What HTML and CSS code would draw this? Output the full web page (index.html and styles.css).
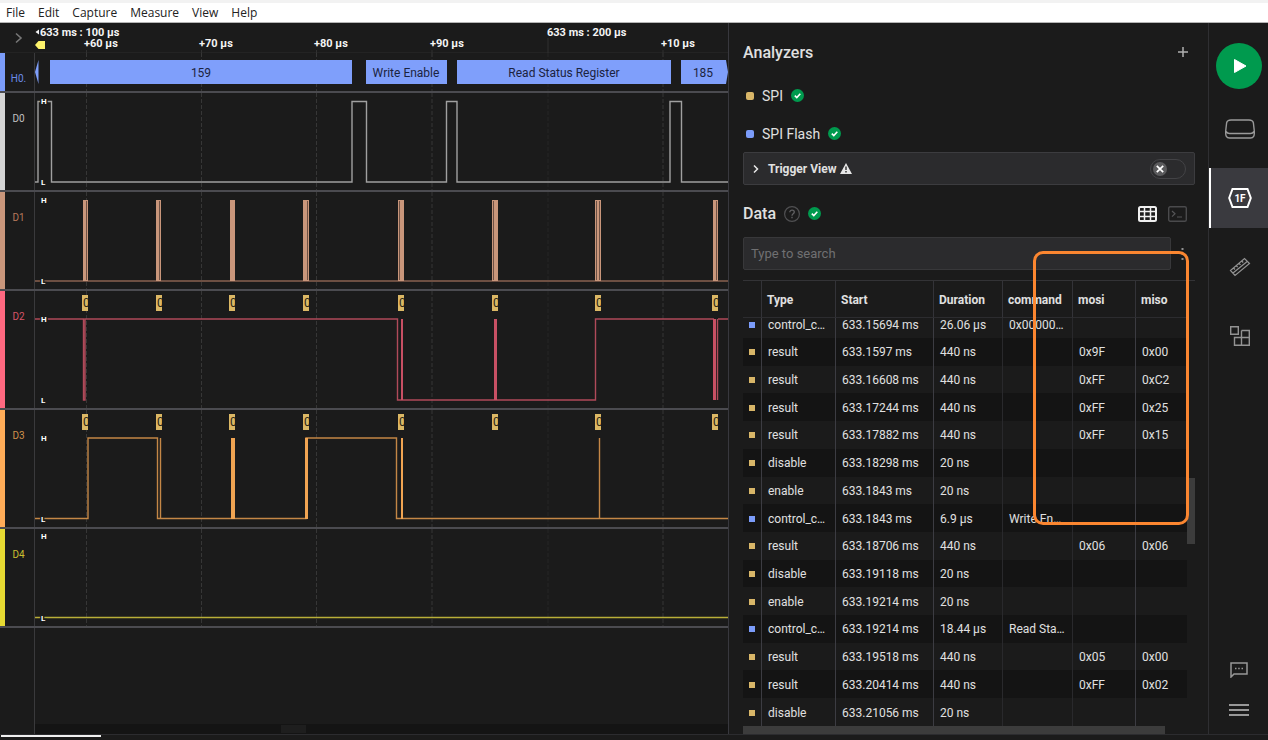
FILE: index.html
```html
<!DOCTYPE html>
<html lang="en">
<head>
	<meta charset="utf-8">
	<title>Logic Analyzer</title>
	<meta name="viewport" content="width=device-width, initial-scale=1">
	<link rel="stylesheet" href="styles.css">
</head>
<body>
	<svg class="defs" width="0" height="0" aria-hidden="true">
		<defs>
			<g id="grid">
				<path class="grid-line" d="M51.5 0V120M166.5 0V120M281.5 0V120M397 0V120M628 0V120"/>
				<path class="grid-line faint" d="M513 0V120"/>
			</g>
			<symbol id="byte" viewBox="0 0 6 16">
				<rect width="6" height="16" fill="#dbb865"/>
				<text class="byte-text" x="1" y="12">0</text>
			</symbol>
			<g id="bytes">
				<use href="#byte" x="47" y="4" width="6" height="16"/>
				<use href="#byte" x="121" y="4" width="6" height="16"/>
				<use href="#byte" x="194" y="4" width="6" height="16"/>
				<use href="#byte" x="268" y="4" width="6" height="16"/>
				<use href="#byte" x="363" y="4" width="6" height="16"/>
				<use href="#byte" x="457" y="4" width="6" height="16"/>
				<use href="#byte" x="560" y="4" width="6" height="16"/>
				<use href="#byte" x="677" y="4" width="6" height="16"/>
			</g>
			<symbol id="check" viewBox="0 0 13 13">
				<circle cx="6.5" cy="6.5" r="6.5" fill="#009a4e"/>
				<path d="M3.8 6.6L5.8 8.5L9.3 4.7" fill="none" stroke="#fff" stroke-width="1.6"/>
			</symbol>
		</defs>
	</svg>

	<nav class="menu-bar">
		<button>File</button>
		<button>Edit</button>
		<button>Capture</button>
		<button>Measure</button>
		<button>View</button>
		<button>Help</button>
	</nav>

	<div class="app">
		<main class="waves">
			<div class="ruler">
				<button class="expand" aria-label="Expand channels">
					<svg width="8" height="12" viewBox="0 0 8 12"><path d="M1 1.5L6 6L1 10.5" fill="none" stroke="#777" stroke-width="1.6"/></svg>
				</button>
				<svg class="track" height="30">
					<path d="M4 6.5V11.5L0.5 9Z" fill="#f4f4f4"/>
					<path d="M0 22L3.5 18H10V26H3.5Z" fill="#fdf36b"/>
					<text class="time" x="5" y="13">633 ms : 100 µs</text>
					<text class="time" x="512" y="13">633 ms : 200 µs</text>
					<text class="time" x="49" y="24">+60 µs</text>
					<text class="time" x="164" y="24">+70 µs</text>
					<text class="time" x="279" y="24">+80 µs</text>
					<text class="time" x="395" y="24">+90 µs</text>
					<text class="time" x="626" y="24">+10 µs</text>
					<path d="M51.5 27V30M166.5 27V30M281.5 27V30M397 27V30M628 27V30M513 15V30" stroke="#303030"/>
				</svg>
			</div>

			<div class="lane lane-h0">
				<div class="name">H0.</div>
				<svg class="track" height="38">
					<use href="#grid"/>
					<g class="frame">
						<path d="M0 19L3.5 7V31Z"/>
						<rect x="15" y="7" width="302" height="24"/>
						<rect x="331" y="7" width="81" height="24"/>
						<rect x="422" y="7" width="214" height="24"/>
						<path d="M646 7H691L693 19L691 31H646Z"/>
					</g>
					<g class="frame-text">
						<text x="166" y="24">159</text>
						<text x="371" y="24">Write Enable</text>
						<text x="529" y="24">Read Status Register</text>
						<text x="668" y="24">185</text>
					</g>
				</svg>
			</div>

			<div class="lane lane-d0">
				<div class="name">D0</div>
				<svg class="track" height="97">
					<use href="#grid"/>
					<path class="signal" d="M0 89H3V8.5H16.5V89H317V8.5H331.5V89H411.5V8.5H422V89H635V8.5H646.5V89H2000"/>
					<text class="level" x="6" y="11">H</text>
					<text class="level" x="6" y="92">L</text>
				</svg>
			</div>

			<div class="lane lane-d1">
				<div class="name">D1</div>
				<svg class="track" height="97">
					<use href="#grid"/>
					<path class="signal" d="M0 89H2000"/>
					<path class="burst" d="M48 8h5v81h-5zM121 8h5v81h-5zM195 8h5v81h-5zM268 8h6v81h-6zM363 8h6v81h-6zM457 8h6v81h-6zM560 8h6v81h-6zM678 8h5v81h-5z"/>
					<path class="streak" d="M51.5 9V88M124.5 9V88M272.5 9V88M364.5 9V88M458.5 9V88M561.5 9V88M564.5 9V88M681.5 9V88"/>
					<text class="level" x="6" y="11">H</text>
					<text class="level" x="6" y="92">L</text>
				</svg>
			</div>

			<div class="lane lane-d2">
				<div class="name">D2</div>
				<svg class="track" height="117">
					<use href="#grid"/>
					<use href="#bytes"/>
					<path class="signal" d="M0 28H48.5V109H50V28H362.5V109H560.5V28H679M683 28H2000"/>
					<path class="burst" d="M366 28h2v81h-2zM459 28h3v81h-3zM678 28h3v81h-3z"/>
					<path class="signal" d="M682.5 28V109"/>
					<text class="level" x="6" y="31">H</text>
					<text class="level" x="6" y="112">L</text>
				</svg>
			</div>

			<div class="lane lane-d3">
				<div class="name">D3</div>
				<svg class="track" height="117">
					<use href="#grid"/>
					<use href="#bytes"/>
					<path class="signal" d="M0 108.5H53V28H122.5V108.5H271V28H361.5V108.5H2000M125.5 28V108.5M564.5 28V108.5"/>
					<path class="burst" d="M196 28h4v81h-4zM270 28h3v81h-3zM366 28h2v81h-2z"/>
					<text class="level" x="6" y="31">H</text>
					<text class="level" x="6" y="112">L</text>
				</svg>
			</div>

			<div class="lane lane-d4">
				<div class="name">D4</div>
				<svg class="track" height="97">
					<use href="#grid"/>
					<path class="signal" d="M0 88.5H2000"/>
					<text class="level" x="6" y="10">H</text>
					<text class="level" x="6" y="92">L</text>
				</svg>
			</div>

			<div class="waves-rest">
				<div class="wave-scroll"><div class="wave-thumb"></div></div>
			</div>
		</main>

		<section class="panel">
			<div class="panel-head">
				<h2>Analyzers</h2>
				<button class="add" aria-label="Add analyzer">
					<svg width="10" height="10" viewBox="0 0 10 10"><path d="M5 0V10M0 5H10" stroke="#b0b0b0" stroke-width="1.5"/></svg>
				</button>
			</div>
			<div class="analyzer">
				<span class="dot gold"></span>SPI
				<svg width="13" height="13"><use href="#check"/></svg>
			</div>
			<div class="analyzer">
				<span class="dot blue"></span>SPI Flash
				<svg width="13" height="13"><use href="#check"/></svg>
			</div>

			<div class="trigger">
				<button class="trigger-name">
					<svg class="chevron" width="6" height="8" viewBox="0 0 6 8"><path d="M1 0.5L4.5 4L1 7.5" fill="none" stroke="#e8e8e8" stroke-width="1.5"/></svg>
					Trigger View
					<svg width="12" height="11" viewBox="0 0 12 11"><path d="M6 0L12 11H0Z" fill="#e8e8e8"/><path d="M6 3.5V7M6 8V9.5" stroke="#2b2b2d" stroke-width="1.4"/></svg>
				</button>
				<label class="switch">
					<input type="checkbox" aria-label="Enable trigger view">
					<svg width="14" height="14" viewBox="0 0 14 14"><circle cx="7" cy="7" r="7" fill="#5a5a5c"/><path d="M3.8 3.8L10.2 10.2M10.2 3.8L3.8 10.2" stroke="#fff" stroke-width="1.7"/></svg>
				</label>
			</div>

			<div class="data-head">
				<h2>Data</h2>
				<svg width="16" height="16" viewBox="0 0 16 16"><circle cx="8" cy="8" r="7.4" fill="none" stroke="#505052" stroke-width="1.2"/><path d="M5.8 6.2C5.8 3.4 10.3 3.5 10.3 6.1C10.3 7.8 8 7.9 8 9.7M8 10.8V12.2" fill="none" stroke="#606062" stroke-width="1.3"/></svg>
				<svg width="13" height="13"><use href="#check"/></svg>
				<button class="view-table" aria-label="Table view">
					<svg width="19" height="16" viewBox="0 0 19 16"><rect x="1" y="1" width="17" height="14" rx="1.5" fill="none" stroke="#f0f0f0" stroke-width="2"/><path d="M1 5.5H18M1 10.5H18M6.5 1V15M12.5 1V15" stroke="#f0f0f0" stroke-width="1.5"/></svg>
				</button>
				<button aria-label="Terminal view">
					<svg width="19" height="16" viewBox="0 0 19 16"><rect x="0.7" y="0.7" width="17.6" height="14.6" rx="1.5" fill="none" stroke="#4a4a4c" stroke-width="1.4"/><path d="M4 5L7 7.8L4 10.6M9 11H14" fill="none" stroke="#555557" stroke-width="1.2"/></svg>
				</button>
			</div>

			<div class="search-row">
				<input type="text" class="search" placeholder="Type to search" aria-label="Search data">
				<button aria-label="Table options">
					<svg width="3" height="14" viewBox="0 0 3 14"><path d="M0.5 1h2v2h-2zM0.5 6h2v2h-2zM0.5 11h2v2h-2z" fill="#909090"/></svg>
				</button>
			</div>

			<div class="table-area">
				<table class="data">
					<colgroup>
						<col class="c-dot"><col class="c-type"><col class="c-start"><col class="c-duration"><col class="c-command"><col class="c-mosi"><col>
					</colgroup>
					<thead>
						<tr><th></th><th>Type</th><th>Start</th><th>Duration</th><th>command</th><th>mosi</th><th>miso</th></tr>
					</thead>
					<tbody>
						<tr class="clipped"><td><span class="mark blue"></span></td><td>control_c…</td><td>633.15694 ms</td><td>26.06 µs</td><td>0x00000…</td><td></td><td></td></tr>
						<tr><td><span class="mark gold"></span></td><td>result</td><td>633.1597 ms</td><td>440 ns</td><td></td><td>0x9F</td><td>0x00</td></tr>
						<tr><td><span class="mark gold"></span></td><td>result</td><td>633.16608 ms</td><td>440 ns</td><td></td><td>0xFF</td><td>0xC2</td></tr>
						<tr><td><span class="mark gold"></span></td><td>result</td><td>633.17244 ms</td><td>440 ns</td><td></td><td>0xFF</td><td>0x25</td></tr>
						<tr><td><span class="mark gold"></span></td><td>result</td><td>633.17882 ms</td><td>440 ns</td><td></td><td>0xFF</td><td>0x15</td></tr>
						<tr><td><span class="mark gold"></span></td><td>disable</td><td>633.18298 ms</td><td>20 ns</td><td></td><td></td><td></td></tr>
						<tr><td><span class="mark gold"></span></td><td>enable</td><td>633.1843 ms</td><td>20 ns</td><td></td><td></td><td></td></tr>
						<tr><td><span class="mark blue"></span></td><td>control_c…</td><td>633.1843 ms</td><td>6.9 µs</td><td>Write En…</td><td></td><td></td></tr>
						<tr><td><span class="mark gold"></span></td><td>result</td><td>633.18706 ms</td><td>440 ns</td><td></td><td>0x06</td><td>0x06</td></tr>
						<tr><td><span class="mark gold"></span></td><td>disable</td><td>633.19118 ms</td><td>20 ns</td><td></td><td></td><td></td></tr>
						<tr><td><span class="mark gold"></span></td><td>enable</td><td>633.19214 ms</td><td>20 ns</td><td></td><td></td><td></td></tr>
						<tr><td><span class="mark blue"></span></td><td>control_c…</td><td>633.19214 ms</td><td>18.44 µs</td><td>Read Sta…</td><td></td><td></td></tr>
						<tr><td><span class="mark gold"></span></td><td>result</td><td>633.19518 ms</td><td>440 ns</td><td></td><td>0x05</td><td>0x00</td></tr>
						<tr><td><span class="mark gold"></span></td><td>result</td><td>633.20414 ms</td><td>440 ns</td><td></td><td>0xFF</td><td>0x02</td></tr>
						<tr><td><span class="mark gold"></span></td><td>disable</td><td>633.21056 ms</td><td>20 ns</td><td></td><td></td><td></td></tr>
					</tbody>
				</table>
				<div class="v-scroll"><div class="v-thumb"></div></div>
			</div>
			<div class="h-thumb"></div>
			<div class="highlight"></div>
		</section>

		<aside class="rail">
			<button class="play" aria-label="Start capture">
				<svg width="14" height="16" viewBox="0 0 14 16"><path d="M1.5 1.5V14.5L13 8Z" fill="#fff" stroke="#fff" stroke-linejoin="round"/></svg>
			</button>
			<button class="rail-item" aria-label="Device">
				<svg width="30" height="20" viewBox="0 0 30 20"><path d="M6 1H24C27 1 28 2 28.4 4L29.3 12C29.6 17 28.5 19 25.5 19H4.5C1.5 19 0.4 17 0.7 12L1.6 4C2 2 3 1 6 1ZM1 12.5C2 14 3 14.5 4.5 14.5H25.5C27 14.5 28 14 29 12.5" fill="none" stroke="#9a9a9a" stroke-width="1.4"/></svg>
			</button>
			<button class="rail-item active" aria-label="Analyzers">
				<svg width="24" height="20" viewBox="0 0 24 20"><path d="M4.5 1H19.5L22.8 10L19.5 19H4.5L1.2 10Z" fill="none" stroke="#fff" stroke-width="2"/><text class="hex" x="12" y="14">1F</text></svg>
			</button>
			<button class="rail-item" aria-label="Measurements">
				<svg width="22" height="20" viewBox="0 0 22 20"><path d="M1.5 13.5L15.5 1.5L20.5 6.5L6 18.5ZM4 16L18.5 4.2M4.5 11L6 12.5M7.2 8.7L8.7 10.2M10 6.4L11.5 7.9M12.7 4L14.2 5.5" fill="none" stroke="#939393" stroke-width="1.2"/></svg>
			</button>
			<button class="rail-item" aria-label="Extensions">
				<svg width="20" height="20" viewBox="0 0 20 20"><path d="M0.7 0.7H8.3V8.3H0.7ZM11.5 4.5H19.3V19.3H4.5V11.5H19.3M11.5 4.5V19.3" fill="none" stroke="#939393" stroke-width="1.4"/></svg>
			</button>
			<div class="rail-bottom">
				<button aria-label="Feedback">
					<svg width="18" height="16" viewBox="0 0 18 16"><path d="M1 15V1H17V12H4Z" fill="none" stroke="#989898" stroke-width="1.5"/><path d="M5 6.5h1.5M8.2 6.5h1.5M11.5 6.5h1.5" stroke="#989898" stroke-width="1.5"/></svg>
				</button>
				<button aria-label="Main menu">
					<svg width="20" height="14" viewBox="0 0 20 14"><path d="M0 2H20M0 7H20M0 12H20" stroke="#989898" stroke-width="2"/></svg>
				</button>
			</div>
		</aside>
	</div>

	<footer class="tab-strip"><div class="tab-line"></div></footer>
</body>
</html>
```
FILE: styles.css
```css
* {
	box-sizing: border-box;
}
body {
	margin: 0;
	height: 100vh;
	display: flex;
	flex-direction: column;
	overflow: hidden;
	font-family: Roboto, "Liberation Sans", sans-serif;
	font-size: 12px;
	color: #e0e0e0;
	background-color: #1b1b1b;
}
button {
	margin: 0;
	padding: 0;
	border: none;
	background: none;
	color: inherit;
	font: inherit;
	cursor: pointer;
}
svg {
	display: block;
	flex-shrink: 0;
}
h2 {
	margin: 0;
	font-size: 16px;
	font-weight: 500;
}
.defs {
	position: absolute;
}

/* menu */
.menu-bar {
	display: flex;
	gap: 13px;
	height: 23px;
	padding: 0 6px;
	border-top: 3px solid #f2f2f2;
	border-bottom: 1px solid #b5b5b5;
	background-color: #fff;
	color: #222;
	font-family: "Open Sans", "Noto Sans", sans-serif;
	font-size: 12px;
}

.app {
	flex: 1;
	min-height: 0;
	display: grid;
	grid-template-columns: minmax(0, 1fr) 480px 60px;
}

/* waveforms */
.waves {
	display: flex;
	flex-direction: column;
	min-height: 0;
}
.ruler {
	display: flex;
	height: 30px;
	border-bottom: 1px solid #232323;
}
.expand {
	width: 35px;
	padding-left: 15px;
}
.track {
	flex: 1;
	min-width: 0;
	overflow: hidden;
}
.time {
	font-size: 11px;
	font-weight: 700;
	fill: #f4f4f4;
}
.lane {
	display: flex;
	border-bottom: 2px solid #4b4b50;
}
.name {
	width: 35px;
	padding: 19px 2px 0 0;
	border-left: 5px solid;
	border-right: 1px solid #3a3a3c;
	font-size: 10px;
	line-height: 14px;
	text-align: center;
}
.lane-h0 .name {
	border-left-color: #7b9cfa;
	color: #6a8be8;
}
.lane-d0 .name {
	border-left-color: #d4d4d4;
	color: #c0c0c0;
}
.lane-d1 .name {
	border-left-color: #c9967b;
	color: #b8795c;
}
.lane-d2 .name {
	border-left-color: #ff6880;
	color: #d85468;
}
.lane-d3 .name {
	border-left-color: #ffac58;
	color: #d0914c;
}
.lane-d4 .name {
	border-left-color: #e6da32;
	color: #cabf30;
}
.signal {
	fill: none;
	stroke-width: 1.4;
}
.lane-d0 .signal {
	stroke: #a0a0a0;
}
.lane-d1 .signal {
	stroke: #8a6250;
}
.lane-d1 .burst {
	fill: #c9967b;
}
.lane-d2 .signal {
	stroke: #b04a5a;
}
.lane-d2 .burst {
	fill: #c85064;
}
.lane-d3 .signal {
	stroke: #c48746;
}
.lane-d3 .burst {
	fill: #f0a452;
}
.lane-d4 .signal {
	stroke: #b8ae38;
}
.streak {
	stroke: #6e5144;
}
.level {
	font-size: 8px;
	font-weight: 700;
	fill: #fff;
	stroke: #1b1b1b;
	stroke-width: 3;
	paint-order: stroke;
}
.grid-line {
	stroke: #363636;
	stroke-dasharray: 4 2;
}
.grid-line.faint {
	stroke: #262626;
}
.byte-text {
	font-size: 12px;
	fill: #2c2514;
}
.frame {
	fill: #7f9ffb;
}
.frame-text {
	font-size: 12px;
	text-anchor: middle;
	fill: #1b2340;
}
.waves-rest {
	flex: 1;
	display: flex;
	align-items: flex-end;
	margin-left: 34px;
	border-left: 1px solid #3a3a3c;
}
.wave-scroll {
	flex: 1;
	height: 10px;
	padding: 1px 0 1px 246px;
	background-color: #141414;
}
.wave-thumb {
	width: 25px;
	height: 8px;
	background-color: #1e1e1e;
}

/* analyzers panel */
.panel {
	position: relative;
	display: flex;
	flex-direction: column;
	min-height: 0;
	padding: 11px 13px 0 14px;
	border-left: 1px solid #38383e;
}
.panel-head {
	display: flex;
	align-items: center;
	justify-content: space-between;
	height: 36px;
	padding-right: 7px;
	margin-bottom: 6px;
}
.analyzer {
	display: flex;
	align-items: center;
	gap: 8px;
	height: 38px;
	padding: 1px 0 0 3px;
	font-size: 14px;
}
.dot {
	width: 8px;
	height: 8px;
	border-radius: 2px;
}
.gold {
	background-color: #d8b668;
}
.blue {
	background-color: #7b9cfa;
}
.trigger {
	display: flex;
	align-items: center;
	justify-content: space-between;
	height: 33px;
	margin-bottom: 12px;
	padding: 0 8px;
	border: 1px solid #3c3c3f;
	border-radius: 2px;
	background-color: #2b2b2d;
}
.trigger-name {
	display: flex;
	align-items: center;
	gap: 4px;
	font-weight: 700;
}
.chevron {
	margin: 0 5px 0 1px;
}
.switch {
	display: flex;
	align-items: center;
	width: 36px;
	height: 20px;
	padding-left: 2px;
	border: 1px solid #434346;
	border-radius: 10px;
	cursor: pointer;
}
.switch input {
	position: absolute;
	opacity: 0;
}
.data-head {
	display: flex;
	align-items: center;
	gap: 8px;
	height: 33px;
	margin-bottom: 7px;
	padding-right: 8px;
}
.view-table {
	margin: 0 3px 0 auto;
}
.search-row {
	display: flex;
	align-items: center;
	gap: 10px;
}
.search {
	flex: 1;
	min-width: 0;
	height: 33px;
	padding: 0 7px;
	border: 1px solid #38383a;
	border-radius: 2px;
	background-color: #2b2b2d;
	color: #e0e0e0;
	font: 13px Roboto, sans-serif;
}
.search + button {
	width: 14px;
}
.search::placeholder {
	color: #707072;
}
.table-area {
	flex: 1;
	min-height: 0;
	display: flex;
	margin-top: 10px;
	border-top: 1px solid #333336;
}
.data {
	flex: 1;
	width: 100%;
	min-width: 0;
	height: 100%;
	border-collapse: separate;
	border-spacing: 0;
	table-layout: fixed;
}
.c-dot {
	width: 19px;
}
.c-type {
	width: 74px;
}
.c-start {
	width: 98px;
}
.c-duration {
	width: 69px;
}
.c-command {
	width: 70px;
}
.c-mosi {
	width: 63px;
}
.data th {
	height: 37px;
	padding: 1px 6px 0 5px;
	border-bottom: 1px solid #2c2c2f;
	border-right: 1px solid #333338;
	font-weight: 700;
	text-align: left;
}
.data td {
	padding: 1px 4px 0 6px;
	border-right: 1px solid #3c3c42;
	line-height: 14px;
	overflow: hidden;
	text-overflow: ellipsis;
	white-space: nowrap;
}
.data th:last-child,
.data td:last-child {
	border-right: none;
}
.data td:nth-child(4),
.data td:nth-child(5) {
	border-right-color: #29292c;
}
.data tbody tr:nth-child(even) {
	background-color: #141414;
}
.data .clipped td {
	height: 20px;
	padding-top: 0;
	vertical-align: top;
}
.mark {
	display: inline-block;
	width: 6px;
	height: 6px;
	vertical-align: 1px;
}
.v-scroll {
	display: flex;
	flex-direction: column;
	flex-shrink: 0;
	width: 8px;
	padding-top: 197px;
}
.v-thumb {
	height: 66px;
	background-color: #3c3c3c;
}
.h-thumb {
	height: 8px;
	margin-right: 30px;
	background-color: #3c3c3c;
}
/* marks the bytes read back over mosi / miso */
.highlight {
	position: absolute;
	top: 228px;
	left: 304px;
	width: 156px;
	height: 274px;
	border: 3px solid #fb8630;
	border-radius: 10px;
	pointer-events: none;
}

/* tool rail */
.rail {
	display: flex;
	flex-direction: column;
	align-items: center;
	gap: 9px;
	padding: 20px 0 4px;
	border-left: 1px solid #2f2f32;
}
.play {
	display: flex;
	align-items: center;
	justify-content: center;
	width: 46px;
	height: 46px;
	margin-bottom: 1px;
	padding-left: 2px;
	border-radius: 50%;
	background-color: #009a4e;
}
.rail-item {
	display: flex;
	align-items: center;
	justify-content: center;
	width: 100%;
	height: 60px;
	border-left: 2px solid transparent;
}
.rail-item.active {
	border-left-color: #fff;
	background-color: #3a3a3f;
}
.hex {
	font-size: 10px;
	font-weight: 700;
	text-anchor: middle;
	fill: #fff;
}
.rail-bottom {
	display: flex;
	flex-direction: column;
	margin-top: auto;
}
.rail-bottom button {
	display: flex;
	align-items: center;
	justify-content: center;
	width: 40px;
	height: 40px;
}

.tab-strip {
	height: 6px;
	border-top: 1px solid #2c2c2f;
}
.tab-line {
	width: 100px;
	height: 2px;
	margin-left: 1px;
	background-color: #f0f0f0;
}
```
